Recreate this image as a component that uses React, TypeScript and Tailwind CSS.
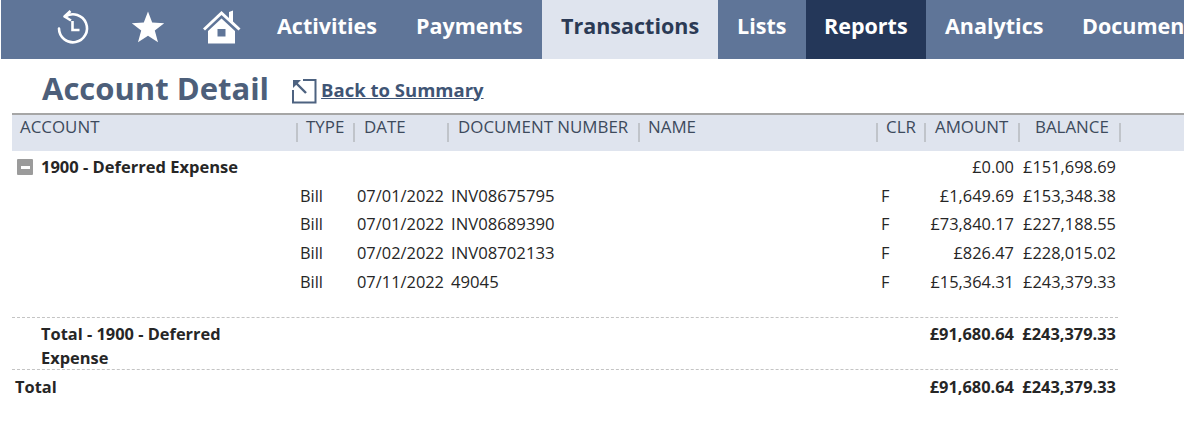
const COLS = "grid grid-cols-[285px_57px_94px_191px_238px_48px_94px_101px]";

const headers: [string, string][] = [
  ["ACCOUNT", "pl-[8px]"],
  ["TYPE", "pl-[9px]"],
  ["DATE", "pl-[10px]"],
  ["DOCUMENT NUMBER", "pl-[10px]"],
  ["NAME", "pl-[9px]"],
  ["CLR", "pl-[9px]"],
  ["AMOUNT", "pl-[10px]"],
  ["BALANCE", "pl-[16px]"],
];

const rows = [
  ["07/01/2022", "INV08675795", "£1,649.69", "£153,348.38", "h-[28px]"],
  ["07/01/2022", "INV08689390", "£73,840.17", "£227,188.55", "h-[28px]"],
  ["07/02/2022", "INV08702133", "£826.47", "£228,015.02", "h-[30px]"],
  ["07/11/2022", "49045", "£15,364.31", "£243,379.33", "h-[28px]"],
];

function Sep() {
  return <span className="absolute right-[-1px] top-[8px] h-[19px] w-[2px] bg-[#c0c4ca]" />;
}

function Tab({ label, cls }: { label: string; cls: string }) {
  return <div className={"flex h-full items-center shrink-0 pb-[7px] " + cls}>{label}</div>;
}

export default function App() {
  return (
    <div className="h-[431px] w-[1184px] overflow-hidden bg-white font-['Open_Sans',sans-serif] text-[#262626]">
      <nav className="ml-[1px] flex h-[59px] items-center overflow-hidden whitespace-nowrap bg-[#5f7598] text-[21.5px] font-bold text-white">
        <div className="flex h-full w-[276px] shrink-0 items-center pb-[6px]">
          <svg className="ml-[54px] h-[36px] w-[36px]" viewBox="0 0 36 36" fill="none" stroke="white" strokeWidth="2.6">
            <path d="M10.5 7.5 A14 14 0 1 1 4 19.5" strokeLinecap="round" />
            <path d="M15.5 2 L9.5 7.5 L16 11.5" strokeLinejoin="round" />
            <path d="M17.5 12 V21 H24.5" />
          </svg>
          <svg className="ml-[39px] h-[36px] w-[36px]" viewBox="0 0 36 36" fill="white">
            <path d="M18 2.5 L22.2 13.6 L34.2 14.2 L24.8 21.6 L28 33.2 L18 26.7 L8 33.2 L11.2 21.6 L1.8 14.2 L13.8 13.6 Z" />
          </svg>
          <svg className="ml-[36px] h-[36px] w-[40px]" viewBox="0 0 40 36" fill="white">
            <path d="M1 19.5 L19.5 2 L27 9 V3 L31 1.5 V12.5 L38.5 19.5 L36.5 21.5 L19.5 6 L3 21.5 Z" />
            <path d="M19.5 9.5 L33 22 V34.5 H6 V22 Z M15.5 20 V27.5 H23.5 V20 Z" fillRule="evenodd" />
          </svg>
        </div>
        <Tab label="Activities" cls="w-[139px]" />
        <Tab label="Payments" cls="w-[126px]" />
        <Tab label="Transactions" cls="w-[176px] pl-[19px] bg-[#dfe4ee] text-[#2b3a55]" />
        <Tab label="Lists" cls="w-[88px] pl-[19px]" />
        <Tab label="Reports" cls="w-[120px] pl-[18px] bg-[#243759]" />
        <Tab label="Analytics" cls="w-[156px] pl-[19px]" />
        <Tab label="Documents" cls="" />
      </nav>

      <div className="flex h-[54px] items-center pl-[42px] pt-[5px]">
        <h1 className="text-[31px] font-bold leading-none text-[#4d5f7a]">Account Detail</h1>
        <svg className="ml-[22px] mt-[4px] h-[26px] w-[26px]" viewBox="0 0 26 26" fill="none">
          <path d="M2 12 V24.5 H24.5 V2 H12" stroke="#4d6280" strokeWidth="2" />
          <path d="M3 3 L15 15" stroke="#4d6280" strokeWidth="2.4" />
          <path d="M2 10 V2 H10 Z" fill="#4d6280" />
        </svg>
        <a className="ml-[4px] mt-[3px] text-[18.5px] font-bold leading-none text-[#3f5575] underline">Back to Summary</a>
      </div>

      <div className={COLS + " ml-[12px] h-[38px] border-t-2 border-[#a6a6a6] bg-[#dfe4ee] text-[16.9px] leading-[22px] text-[#3d4a5c]"}>
        {headers.map(([h, p]) => (
          <div key={h} className={"relative whitespace-nowrap pt-[1px] " + p}>
            {h}
            <Sep />
          </div>
        ))}
      </div>

      <div className="ml-[12px] text-[16.4px]">
        <div className={COLS + " h-[31px] items-center pt-[1px]"}>
          <div className="flex items-center pl-[5px] text-[16.5px] font-bold">
            <span className="flex h-[16px] w-[16px] items-center justify-center rounded-[1px] bg-[#9b9b9b]">
              <span className="h-[3px] w-[9px] bg-white" />
            </span>
            <span className="ml-[8px] whitespace-nowrap">1900 - Deferred Expense</span>
          </div>
          <div /><div /><div /><div /><div />
          <div className="pr-[5px] text-right">£0.00</div>
          <div className="pr-[4px] text-right">£151,698.69</div>
        </div>
        {rows.map((r, i) => (
          <div key={i} className={COLS + " items-center " + r[4]}>
            <div />
            <div className="pl-[3px]">Bill</div>
            <div className="pl-[3px]">{r[0]}</div>
            <div className="pl-[3px] text-[16.7px]">{r[1]}</div>
            <div />
            <div className="pl-[4px]">F</div>
            <div className="pr-[5px] text-right">{r[2]}</div>
            <div className="pr-[4px] text-right">{r[3]}</div>
          </div>
        ))}
        <div className="mt-[21px] w-[1106px] border-t border-dashed border-[#c4c4c4]" />
        <div className={COLS + " h-[51px] pt-[4px] font-bold leading-[23.5px]"}>
          <div className="w-[240px] pl-[29px]">Total - 1900 - Deferred Expense</div>
          <div /><div /><div /><div /><div />
          <div className="pr-[5px] text-right">£91,680.64</div>
          <div className="pr-[4px] text-right">£243,379.33</div>
        </div>
        <div className="w-[1106px] border-t border-dashed border-[#c4c4c4]" />
        <div className={COLS + " h-[34px] items-center font-bold"}>
          <div className="pl-[3px]">Total</div>
          <div /><div /><div /><div /><div />
          <div className="pr-[5px] text-right">£91,680.64</div>
          <div className="pr-[4px] text-right">£243,379.33</div>
        </div>
      </div>
    </div>
  );
}
